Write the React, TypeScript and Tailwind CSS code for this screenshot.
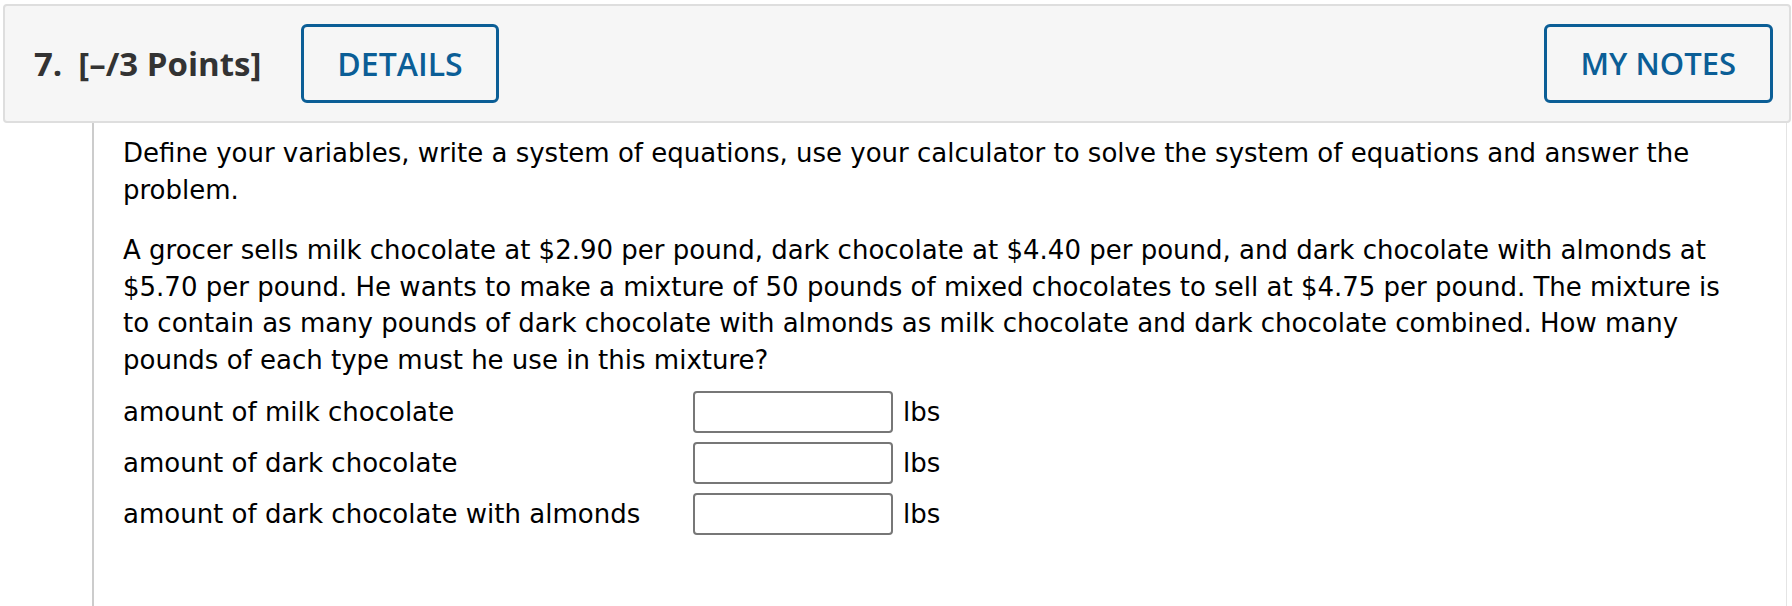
const rows = [
  "amount of milk chocolate",
  "amount of dark chocolate",
  "amount of dark chocolate with almonds",
];

const QuestionHeader = () => {
  return (
    <div className="ml-[3px] mt-[4px] w-[1788px] h-[119px] flex items-center border-2 border-[#dedede] rounded-[4px] bg-[#f6f6f6] pl-[29px] pr-[16px] font-['Open_Sans',sans-serif]">
      <div className="flex items-center text-[33px] font-bold text-[#333333]">
        <span>7.</span>
        <span className="ml-[16px]">[–/3 Points]</span>
      </div>
      <button className="ml-[40px] h-[79px] px-[33px] border-[3px] border-[#0b5e96] rounded-[6px] text-[32px] font-semibold text-[#0b5e96]">
        DETAILS
      </button>
      <button className="ml-auto h-[79px] px-[34px] border-[3px] border-[#0b5e96] rounded-[6px] text-[31px] font-semibold text-[#0b5e96]">
        MY NOTES
      </button>
    </div>
  );
};

export default function App() {
  return (
    <div className="w-[1792px] h-[606px] bg-white overflow-hidden">
      <QuestionHeader />
      <div className="ml-[92px] mr-[5px] h-[483px] border-l-2 border-r border-l-[#cccccc] border-r-[#e4e4e4] pl-[29px] pr-[46px] pt-[12px] font-['DejaVu_Sans','Verdana',sans-serif] text-[26px] leading-[36.5px] text-black">
        <p>
          Define your variables, write a system of equations, use your calculator to solve the system of equations and answer the problem.
        </p>
        <p className="mt-[24px]">
          A grocer sells milk chocolate at $2.90 per pound, dark chocolate at $4.40 per pound, and dark chocolate with almonds at $5.70 per pound. He wants to make a mixture of 50 pounds of mixed chocolates to sell at $4.75 per pound. The mixture is to contain as many pounds of dark chocolate with almonds as milk chocolate and dark chocolate combined. How many pounds of each type must he use in this mixture?
        </p>
        <div className="mt-[13px] flex flex-col gap-[9px]">
          {rows.map((label) => (
            <div key={label} className="flex items-center">
              <span className="w-[570px]">{label}</span>
              <input
                type="text"
                className="w-[200px] h-[42px] border-2 border-[#777777] rounded-[4px] bg-white"
              />
              <span className="ml-[10px]">lbs</span>
            </div>
          ))}
        </div>
      </div>
    </div>
  );
}
